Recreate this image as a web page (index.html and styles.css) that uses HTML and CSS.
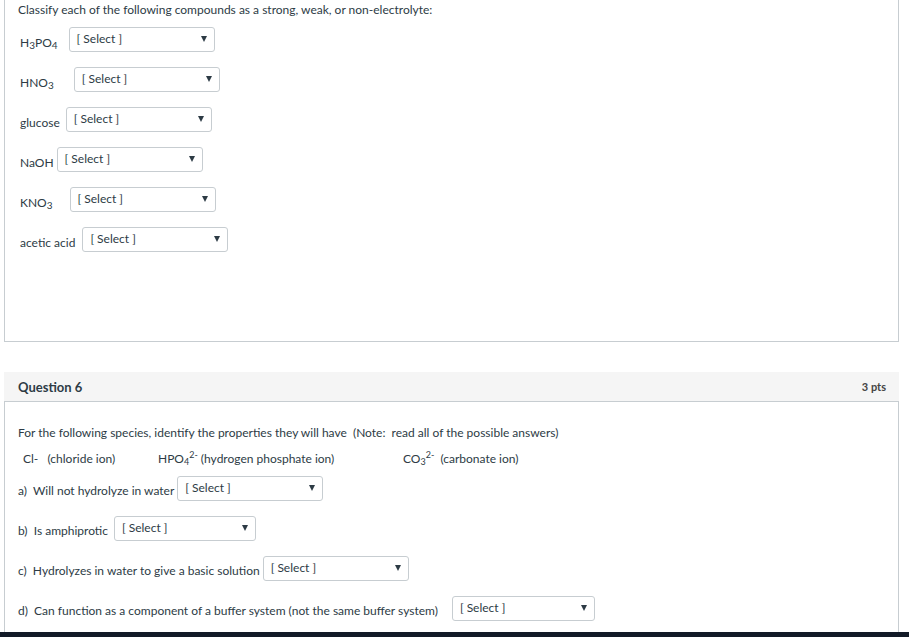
FILE: index.html
```html
<!DOCTYPE html>
<html>
<head>
<meta charset="utf-8">
<link rel="stylesheet" href="styles.css">
</head>
<body>
<div class="page">
  <div class="box box-top">
    <p class="intro">Classify each of the following compounds as a strong, weak, or non-electrolyte:</p>
    <div class="row"><span class="lbl">H<sub>3</sub>PO<sub>4</sub></span><div class="sel g1"><span>[ Select ]</span><i class="arrow"></i></div></div>
    <div class="row"><span class="lbl">HNO<sub>3</sub></span><div class="sel g2"><span>[ Select ]</span><i class="arrow"></i></div></div>
    <div class="row"><span class="lbl">glucose</span><div class="sel g3"><span>[ Select ]</span><i class="arrow"></i></div></div>
    <div class="row"><span class="lbl">NaOH</span><div class="sel g4"><span>[ Select ]</span><i class="arrow"></i></div></div>
    <div class="row"><span class="lbl">KNO<sub>3</sub></span><div class="sel g5"><span>[ Select ]</span><i class="arrow"></i></div></div>
    <div class="row"><span class="lbl">acetic acid</span><div class="sel g6"><span>[ Select ]</span><i class="arrow"></i></div></div>
  </div>

  <div class="qhead">
    <span class="qtitle">Question 6</span>
    <span class="pts">3 pts</span>
  </div>
  <div class="box box-q6">
    <p class="intro2">For the following species, identify the properties they will have&nbsp; (Note:&nbsp; read all of the possible answers)</p>
    <div class="species">
      <span class="sp sp1">Cl-&nbsp;&nbsp; (chloride ion)</span>
      <span class="sp sp2">HPO<sub>4</sub><sup>2-</sup> (hydrogen phosphate ion)</span>
      <span class="sp sp3">CO<sub>3</sub><sup>2-</sup>&nbsp; (carbonate ion)</span>
    </div>
    <div class="row2"><span class="lbl2">a)&nbsp; Will not hydrolyze in water</span><div class="sel h1"><span>[ Select ]</span><i class="arrow"></i></div></div>
    <div class="row2"><span class="lbl2">b)&nbsp; Is amphiprotic</span><div class="sel h2"><span>[ Select ]</span><i class="arrow"></i></div></div>
    <div class="row2"><span class="lbl2">c)&nbsp; Hydrolyzes in water to give a basic solution</span><div class="sel h3"><span>[ Select ]</span><i class="arrow"></i></div></div>
    <div class="row2"><span class="lbl2">d)&nbsp; Can function as a component of a buffer system (not the same buffer system)</span><div class="sel h4"><span>[ Select ]</span><i class="arrow"></i></div></div>
  </div>
</div>
<div class="bottombar"></div>
</body>
</html>
```
FILE: styles.css
```css
html, body {
  margin: 0;
  padding: 0;
  background: #ffffff;
}
body {
  font-family: Lato, "Open Sans", sans-serif;
  font-size: 12px;
  color: #2d3b45;
  overflow: hidden;
}
.page {
  padding-left: 4px;
  width: 895px;
}
.box {
  border: 1px solid #c7cdd1;
  box-sizing: border-box;
}
.box-top {
  border-top: none;
  height: 342px;
  padding: 1px 0 0 13px;
}
.intro {
  margin: 0 0 8px 0;
  line-height: 18px;
  height: 18px;
}
.row {
  display: flex;
  align-items: center;
  height: 25px;
  margin: 0 0 15px 0;
}
.lbl {
  padding-left: 2px;
  margin-top: 6px;
  white-space: nowrap;
}
sub {
  font-size: 9px;
  vertical-align: -2px;
  line-height: 0;
}
sup {
  font-size: 9px;
  vertical-align: 5px;
  line-height: 0;
}
.lbl sub { font-size: 10px; vertical-align: -2px; }
.sel {
  position: relative;
  box-sizing: border-box;
  width: 146px;
  height: 25px;
  border: 1px solid #c7cdd1;
  border-radius: 3px;
  background: #fff;
  padding-left: 7px;
  display: flex;
  align-items: center;
  color: #2d3b45;
}
.sel span {
  margin-top: -2px;
}
.arrow {
  position: absolute;
  right: 7px;
  top: 8px;
  width: 0;
  height: 0;
  border-left: 3px solid transparent;
  border-right: 3px solid transparent;
  border-top: 6px solid #2d3b45;
}
.g1 { margin-left: 11px; }
.g2 { margin-left: 20px; }
.g3 { margin-left: 6px; }
.g4 { margin-left: 3px; }
.g5 { margin-left: 17px; }
.g6 { margin-left: 7px; }

.qhead {
  margin-top: 30px;
  height: 29px;
  background: #f5f5f5;
  display: flex;
  align-items: center;
  justify-content: space-between;
  padding: 0 13px 0 14px;
}
.qtitle {
  font-weight: bold;
  font-size: 13px;
  color: #2d3b45;
}
.pts {
  font-weight: bold;
  font-size: 11px;
  color: #444;
}
.box-q6 {
  height: 260px;
  padding: 22px 0 0 13px;
}
.intro2 {
  margin: 0 0 8px 0;
  line-height: 18px;
  height: 18px;
}
.species {
  display: flex;
  line-height: 18px;
  height: 18px;
  margin: 0 0 8px 0;
  padding-left: 5px;
}
.sp { white-space: nowrap; }
.sp1 { width: 135px; }
.sp2 { width: 245px; }
.row2 {
  display: flex;
  align-items: center;
  height: 25px;
  margin: 0 0 15px 0;
}
.lbl2 {
  margin-top: 4px;
  white-space: nowrap;
}
.h1 { margin-left: 3px; }
.h2 { margin-left: 6px; width: 142px; }
.h3 { margin-left: 3px; }
.h4 { margin-left: 14px; width: 143px; }

.bottombar {
  position: fixed;
  left: 0;
  right: 0;
  bottom: 0;
  height: 5px;
  background: #121a27;
}
```
